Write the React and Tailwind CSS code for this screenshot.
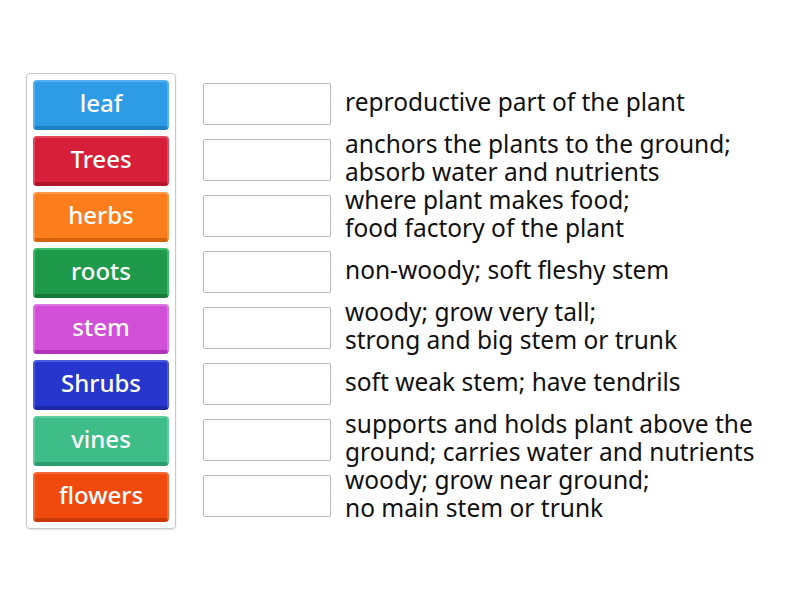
import React from "react";

const tiles = [
  { label: "leaf", cls: "bg-[#2d9be6] border-[#55b0ef] border-b-[#1d7fc4]" },
  { label: "Trees", cls: "bg-[#d81f3a] border-[#e2495e] border-b-[#b0152c]" },
  { label: "herbs", cls: "bg-[#fb7d1c] border-[#fc9a4c] border-b-[#d5620c]" },
  { label: "roots", cls: "bg-[#1f9a4b] border-[#3dbd6a] border-b-[#157a38]" },
  { label: "stem", cls: "bg-[#d24fd8] border-[#dc76e0] border-b-[#b232ba]" },
  { label: "Shrubs", cls: "bg-[#2737cd] border-[#4b59dc] border-b-[#1b28a8]" },
  { label: "vines", cls: "bg-[#3ebd89] border-[#5fcda0] border-b-[#2c9d6f]" },
  { label: "flowers", cls: "bg-[#f04a0f] border-[#f46a38] border-b-[#c9390a]" },
];

const defs = [
  ["reproductive part of the plant"],
  ["anchors the plants to the ground;", "absorb water and nutrients"],
  ["where plant makes food;", "food factory of the plant"],
  ["non-woody; soft fleshy stem"],
  ["woody; grow very tall;", "strong and big stem or trunk"],
  ["soft weak stem; have tendrils"],
  ["supports and holds plant above the", "ground; carries water and nutrients"],
  ["woody; grow near ground;", "no main stem or trunk"],
];

export default function App() {
  return (
    <div
      className="w-[800px] h-[600px] bg-white flex items-start pl-[26px] pt-[73px]"
      style={{ fontFamily: '"Noto Sans", "Open Sans", sans-serif' }}
    >
      <div className="w-[150px] border border-[#c8c8c8] rounded-[4px] p-[6px] flex flex-col gap-[6px] shadow-[0_1px_2px_rgba(0,0,0,0.12)]">
        {tiles.map((t) => (
          <div
            key={t.label}
            className={`h-[50px] rounded-[4px] border-[2px] border-b-[4px] flex items-center justify-center pb-[2px] text-white text-[24px] font-medium leading-none ${t.cls}`}
          >
            {t.label}
          </div>
        ))}
      </div>
      <div className="ml-[27px] mt-[3px] flex flex-col">
        {defs.map((d, i) => (
          <div key={i} className="h-[56px] flex items-center">
            <div className="w-[128px] h-[42px] border border-[#b9b9b9] rounded-[2px] bg-white shrink-0" />
            <div className="ml-[14px] mt-[-5px] text-[24.5px] leading-[28px] text-[#111] whitespace-nowrap">
              {d.map((l, j) => (
                <div key={j}>{l}</div>
              ))}
            </div>
          </div>
        ))}
      </div>
    </div>
  );
}
